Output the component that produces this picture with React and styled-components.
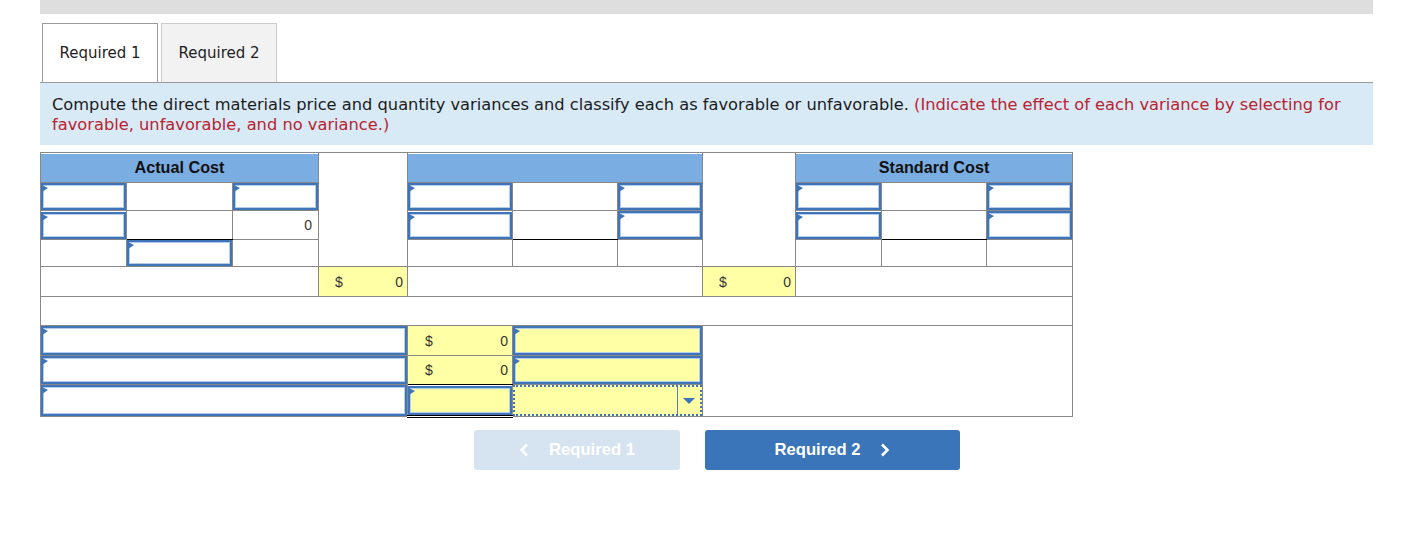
import React from 'react';
import styled, { createGlobalStyle } from 'styled-components';

const GlobalStyle = createGlobalStyle`
  body {
    margin: 0;
    background: #ffffff;
    font-family: "DejaVu Sans", Verdana, sans-serif;
    color: #222222;
  }
`;

const Page = styled.div`
  width: 1333px;
  padding-left: 40px;
`;

const TopBar = styled.div`
  height: 14px;
  background: #dedede;
`;

const TabBar = styled.div`
  display: flex;
  gap: 3px;
  margin-top: 9px;
  padding-left: 2px;
  border-bottom: 1px solid #999999;
`;

const Tab = styled.div`
  box-sizing: border-box;
  width: 116px;
  height: 59px;
  display: flex;
  align-items: center;
  justify-content: center;
  font-size: 15px;
  color: #1e1e1e;
  background: ${p => (p.active ? '#ffffff' : '#f2f2f2')};
  border: 1px solid ${p => (p.active ? '#999999' : '#cccccc')};
  border-bottom: none;
`;

const Prompt = styled.div`
  background: #d9eaf7;
  padding: 12px 12px 11px 12px;
  font-size: 16.25px;
  line-height: 19.5px;
  color: #1c1c1c;
`;

const Hint = styled.span`
  color: #b8232f;
`;

const Grid = styled.table`
  margin-top: 7px;
  border-collapse: collapse;
  table-layout: fixed;
  width: 1033px;
  font-family: "Liberation Sans", Arial, sans-serif;
  font-size: 14px;
  color: #333333;
`;

const Head = styled.th`
  height: 29px;
  padding: 0;
  border: 1px solid #888888;
  background: #7aade2;
  box-shadow: inset 0 1px 0 #ffffff;
  font-size: 16.2px;
  font-weight: bold;
  color: #111111;
  text-align: center;
`;

const underline = {
  single: '1px solid #000000',
  double: '3px double #000000',
};

const Cell = styled.td`
  height: ${p => p.h || 27}px;
  padding: 0;
  border: 1px solid #888888;
  border-bottom: ${p => underline[p.under] || '1px solid #888888'};
  background: ${p => (p.yellow ? '#ffffa6' : '#ffffff')};
  text-align: ${p => p.align || 'left'};
  vertical-align: middle;
`;

const Plain = styled.div`
  padding-right: 6px;
`;

const Field = styled.div`
  position: relative;
  box-sizing: border-box;
  height: ${p => p.h || 27}px;
  border: 2px solid #3f74b8;
  box-shadow: inset 0 0 0 1px #b3cdec;
  background: ${p => (p.yellow ? '#ffffa6' : '#ffffff')};

  &::before {
    content: '';
    position: absolute;
    left: -1px;
    top: 0;
    border-top: 3px solid transparent;
    border-bottom: 4px solid transparent;
    border-left: 6px solid #3f74b8;
  }
`;

const Money = styled.div`
  display: flex;
  justify-content: space-between;
  padding: 0 4px 0 ${p => p.lead || 16}px;
`;

const Select = styled.div`
  box-sizing: border-box;
  height: 31px;
  display: flex;
  justify-content: flex-end;
  border: 2px dotted #3f74b8;
  background: #ffffa6;
`;

const SelectArrow = styled.div`
  width: 22px;
  display: flex;
  align-items: center;
  justify-content: center;
  border-left: 1px solid #5d7ea8;
`;

const Actions = styled.div`
  display: flex;
  gap: 25px;
  margin: 12px 0 0 434px;
`;

const NavButton = styled.button`
  box-sizing: border-box;
  width: ${p => p.w}px;
  height: 40px;
  display: flex;
  align-items: center;
  justify-content: center;
  gap: 20px;
  border: none;
  border-radius: 3px;
  background: ${p => (p.muted ? '#d6e3f1' : '#3a75b9')};
  color: #ffffff;
  font-family: "Liberation Sans", Arial, sans-serif;
  font-size: 16.6px;
  font-weight: bold;
  cursor: ${p => (p.muted ? 'default' : 'pointer')};
`;

const Chevron = ({ dir }) => (
  <svg width="10" height="14" viewBox="0 0 10 14">
    <polyline
      points={dir === 'left' ? '8,1.5 2.5,7 8,12.5' : '2,1.5 7.5,7 2,12.5'}
      fill="none"
      stroke="#ffffff"
      strokeWidth="2.6"
    />
  </svg>
);

const widths = [86, 106, 86, 89, 105, 105, 85, 93, 86, 105, 86];

// one three-column group of the upper grid: input, blank, then whatever goes last
const Group = ({ h, under, last }) => (
  <>
    <Cell h={h}><Field /></Cell>
    <Cell h={h} under={under} />
    {last}
  </>
);

export default function App() {
  return (
    <Page>
      <GlobalStyle />
      <TopBar />
      <TabBar>
        <Tab active>Required 1</Tab>
        <Tab>Required 2</Tab>
      </TabBar>
      <Prompt>
        Compute the direct materials price and quantity variances and classify each as favorable or
        unfavorable. <Hint>(Indicate the effect of each variance by selecting for favorable, unfavorable, and no variance.)</Hint>
      </Prompt>

      <Grid>
        <colgroup>
          {widths.map((w, i) => <col key={i} style={{ width: w }} />)}
        </colgroup>
        <tbody>
          <tr>
            <Head colSpan={3}>Actual Cost</Head>
            <Cell rowSpan={4} />
            <Head colSpan={3} />
            <Cell rowSpan={4} />
            <Head colSpan={3}>Standard Cost</Head>
          </tr>
          <tr>
            <Group h={27} last={<Cell h={27}><Field /></Cell>} />
            <Group h={27} last={<Cell h={27}><Field /></Cell>} />
            <Group h={27} last={<Cell h={27}><Field /></Cell>} />
          </tr>
          <tr>
            <Group h={28} under="single" last={<Cell h={28} align="right"><Plain>0</Plain></Cell>} />
            <Group h={28} under="single" last={<Cell h={28}><Field h={28} /></Cell>} />
            <Group h={28} under="single" last={<Cell h={28}><Field h={28} /></Cell>} />
          </tr>
          <tr>
            <Cell h={26} />
            <Cell h={26}><Field h={26} /></Cell>
            <Cell h={26} />
            <Cell h={26} />
            <Cell h={26} />
            <Cell h={26} />
            <Cell h={26} />
            <Cell h={26} />
            <Cell h={26} />
          </tr>
          <tr>
            <Cell colSpan={3} h={29} />
            <Cell yellow h={29}><Money><span>$</span><span>0</span></Money></Cell>
            <Cell colSpan={3} h={29} />
            <Cell yellow h={29}><Money><span>$</span><span>0</span></Money></Cell>
            <Cell colSpan={3} h={29} />
          </tr>
          <tr>
            <Cell colSpan={11} h={28} />
          </tr>
          <tr>
            <Cell colSpan={4} h={29}><Field h={29} /></Cell>
            <Cell yellow h={29}><Money lead={17}><span>$</span><span>0</span></Money></Cell>
            <Cell colSpan={2} h={29}><Field h={29} yellow /></Cell>
            <Cell colSpan={4} rowSpan={3} />
          </tr>
          <tr>
            <Cell colSpan={4} h={28}><Field h={28} /></Cell>
            <Cell yellow h={28} under="single"><Money lead={17}><span>$</span><span>0</span></Money></Cell>
            <Cell colSpan={2} h={28}><Field h={28} yellow /></Cell>
          </tr>
          <tr>
            <Cell colSpan={4} h={30}><Field h={31} /></Cell>
            <Cell h={30} under="double"><Field h={29} yellow /></Cell>
            <Cell colSpan={2} h={30}>
              <Select>
                <SelectArrow>
                  <svg width="12" height="6" viewBox="0 0 12 6">
                    <polygon points="0,0 12,0 6,6" fill="#3f74b8" />
                  </svg>
                </SelectArrow>
              </Select>
            </Cell>
          </tr>
        </tbody>
      </Grid>

      <Actions>
        <NavButton muted w={206}>
          <Chevron dir="left" />
          Required 1
        </NavButton>
        <NavButton w={255}>
          Required 2
          <Chevron dir="right" />
        </NavButton>
      </Actions>
    </Page>
  );
}
